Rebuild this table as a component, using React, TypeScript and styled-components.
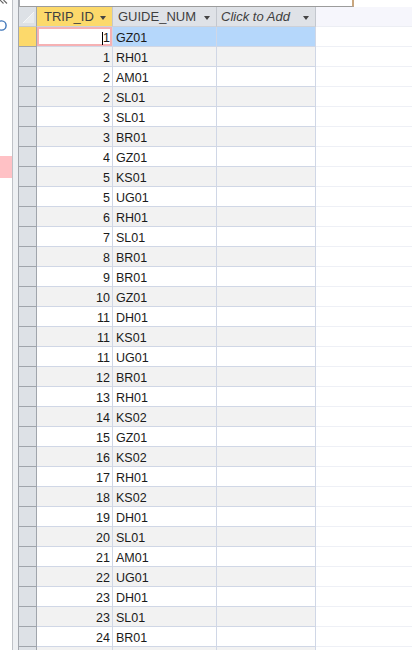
import React from "react";
import styled, { createGlobalStyle } from "styled-components";

const GlobalStyle = createGlobalStyle`
  html, body { margin: 0; padding: 0; background: #fff; overflow: hidden; }
  #root { width: 412px; height: 650px; }
`;

const rows: [number, string][] = [
  [1, "GZ01"], [1, "RH01"], [2, "AM01"], [2, "SL01"], [3, "SL01"], [3, "BR01"],
  [4, "GZ01"], [5, "KS01"], [5, "UG01"], [6, "RH01"], [7, "SL01"], [8, "BR01"],
  [9, "BR01"], [10, "GZ01"], [11, "DH01"], [11, "KS01"], [11, "UG01"], [12, "BR01"],
  [13, "RH01"], [14, "KS02"], [15, "GZ01"], [16, "KS02"], [17, "RH01"], [18, "KS02"],
  [19, "DH01"], [20, "SL01"], [21, "AM01"], [22, "UG01"], [23, "DH01"], [23, "SL01"],
  [24, "BR01"], [0, ""],
];

const Page = styled.div`
  display: flex;
  width: 412px;
  height: 650px;
  overflow: hidden;
  font-family: "Liberation Sans", Arial, sans-serif;
`;

const NavEdge = styled.div`
  width: 12px;
  flex: none;
  display: flex;
  flex-direction: column;
  background: #fff;
  overflow: hidden;
`;

const NavIcon = styled.svg<{ $mt: number }>`
  display: block;
  flex: none;
  margin-top: ${(p) => p.$mt}px;
`;

const NavMarker = styled.div`
  margin-top: 124px;
  height: 22px;
  width: 12px;
  background: #ffc1c5;
`;

const Splitter = styled.div`
  width: 5px;
  flex: none;
  background: #eef0f3;
  border-left: 1px solid #bfc2c7;
  border-right: 1px solid #a3a7ae;
`;

const Main = styled.div`
  flex: 1;
  display: flex;
  flex-direction: column;
  min-width: 0;
`;

const TopBar = styled.div`
  height: 7px;
  flex: none;
  display: flex;
`;

const TabBox = styled.div`
  width: 335px;
  height: 7px;
  box-sizing: border-box;
  border-left: 1px solid #a8abb0;
  border-right: 2px solid #c9a67e;
  border-bottom: 1px solid #9c9c9c;
  background: #fff;
  overflow: hidden;
`;

const TopRest = styled.div`
  flex: 1;
  overflow: hidden;
`;

const Row = styled.div`
  display: flex;
  height: 20px;
  flex: none;
`;

const Selector = styled.div<{ $current?: boolean; $corner?: boolean }>`
  width: 18px;
  flex: none;
  box-sizing: border-box;
  background: ${(p) => (p.$current ? "#fcd96b" : "#dde1e6")};
  border-right: 1px solid #a0a5ac;
  border-bottom: 1px solid ${(p) => (p.$corner ? "#c4c8ce" : "#a0a5ac")};
  display: flex;
  align-items: flex-end;
  justify-content: flex-end;
`;

const HeadCell = styled.div<{ $w: number; $active?: boolean; $pad: number }>`
  width: ${(p) => p.$w}px;
  flex: none;
  box-sizing: border-box;
  background: ${(p) => (p.$active ? "#fcd96b" : "#dfe2e7")};
  border-right: 1px solid #c3c7ce;
  border-bottom: 1px solid #cdd1d8;
  display: flex;
  align-items: center;
  padding-left: ${(p) => p.$pad}px;
  padding-right: 6px;
  padding-top: 1px;
  font-size: 13px;
  color: #3f3f3f;
  white-space: nowrap;
`;

const HeadLabel = styled.span<{ $italic?: boolean }>`
  flex: 1;
  font-style: ${(p) => (p.$italic ? "italic" : "normal")};
  line-height: 18px;
`;

const Arrow = styled.span`
  width: 0;
  height: 0;
  border-left: 3.5px solid transparent;
  border-right: 3.5px solid transparent;
  border-top: 4px solid #444;
  margin-top: 1px;
`;

const HeadRest = styled.div`
  flex: 1;
  background: #f6f6fc;
  border-bottom: 1px solid #eceef4;
`;

const Cell = styled.div<{ $w: number; $bg: string; $right?: boolean; $focus?: boolean }>`
  width: ${(p) => p.$w}px;
  flex: none;
  box-sizing: border-box;
  background: ${(p) => p.$bg};
  border-right: 1px solid #d0d7e6;
  border-bottom: 1px solid #d0d7e6;
  display: flex;
  align-items: center;
  justify-content: ${(p) => (p.$right ? "flex-end" : "flex-start")};
  padding: 4px 2px 0 3px;
  font-size: 12.5px;
  color: #1a1a1a;
  line-height: 15px;
  white-space: nowrap;
  box-shadow: ${(p) => (p.$focus ? "inset 0 0 0 2px #f6b1b3" : "none")};
`;

const Caret = styled.span`
  width: 1px;
  height: 13px;
  background: #000;
`;

const RestCell = styled.div`
  flex: 1;
  border-bottom: 1px solid #eef0f6;
  background: #fff;
`;

const COLS = { trip: 76, guide: 104, click: 99 };

export default function App() {
  return (
    <>
      <GlobalStyle />
      <Page>
        <NavEdge>
          <NavIcon $mt={0} width="12" height="6" viewBox="0 0 12 6">
            <path d="M0 0 L3.5 3.5 M3.5 0 L7 3.5" stroke="#666" strokeWidth="1.1" fill="none" />
          </NavIcon>
          <NavIcon $mt={14} width="12" height="12" viewBox="0 0 12 12">
            <circle cx="1.5" cy="5.5" r="4.6" stroke="#3d74b8" strokeWidth="1.4" fill="none" />
          </NavIcon>
          <NavMarker />
        </NavEdge>
        <Splitter />
        <Main>
          <TopBar>
            <TabBox>
              <svg width="333" height="6" viewBox="0 0 333 6">
                <rect x="5" y="0" width="12" height="2" fill="#4b586b" />
                <path d="M97 0 Q99 5 104 6" stroke="#b5b5b5" fill="none" />
                <rect x="100" y="0" width="17" height="2" fill="#4b586b" />
                <path d="M168 0 Q170 5 175 6" stroke="#b5b5b5" fill="none" />
                <rect x="171" y="0" width="15" height="2" fill="#4b586b" />
                <path d="M278 0 Q280 5 285 6" stroke="#b5b5b5" fill="none" />
                <rect x="283" y="0" width="15" height="2" fill="#4b586b" />
              </svg>
            </TabBox>
            <TopRest>
              <svg width="56" height="7" viewBox="0 0 56 7">
                <rect x="5" y="0" width="14" height="2" fill="#4b586b" />
                <rect x="51" y="0" width="3" height="2" fill="#d24b3c" />
              </svg>
            </TopRest>
          </TopBar>
          <Row>
            <Selector $corner>
              <svg width="17" height="19" viewBox="0 0 17 19">
                <path d="M4 16 L15 5 L15 16 Z" fill="#e9ecef" />
                <path d="M4 16 L15 5" stroke="#f6f7f8" strokeWidth="1" />
              </svg>
            </Selector>
            <HeadCell $w={COLS.trip} $active $pad={7}>
              <HeadLabel>TRIP_ID</HeadLabel>
              <Arrow />
            </HeadCell>
            <HeadCell $w={COLS.guide} $pad={5}>
              <HeadLabel>GUIDE_NUM</HeadLabel>
              <Arrow />
            </HeadCell>
            <HeadCell $w={COLS.click} $pad={4}>
              <HeadLabel $italic>Click to Add</HeadLabel>
              <Arrow />
            </HeadCell>
            <HeadRest />
          </Row>
          {rows.map(([id, guide], i) => {
            const current = i === 0;
            const empty = id === 0;
            const bg = current ? "#b5d7fb" : i % 2 === 1 ? "#f2f2f2" : "#ffffff";
            return (
              <Row key={i}>
                <Selector $current={current} />
                <Cell $w={COLS.trip} $bg={current ? "#ffffff" : bg} $right $focus={current}>
                  {current && <Caret />}
                  {empty ? "" : id}
                </Cell>
                <Cell $w={COLS.guide} $bg={bg}>{guide}</Cell>
                <Cell $w={COLS.click} $bg={bg} />
                <RestCell />
              </Row>
            );
          })}
        </Main>
      </Page>
    </>
  );
}
